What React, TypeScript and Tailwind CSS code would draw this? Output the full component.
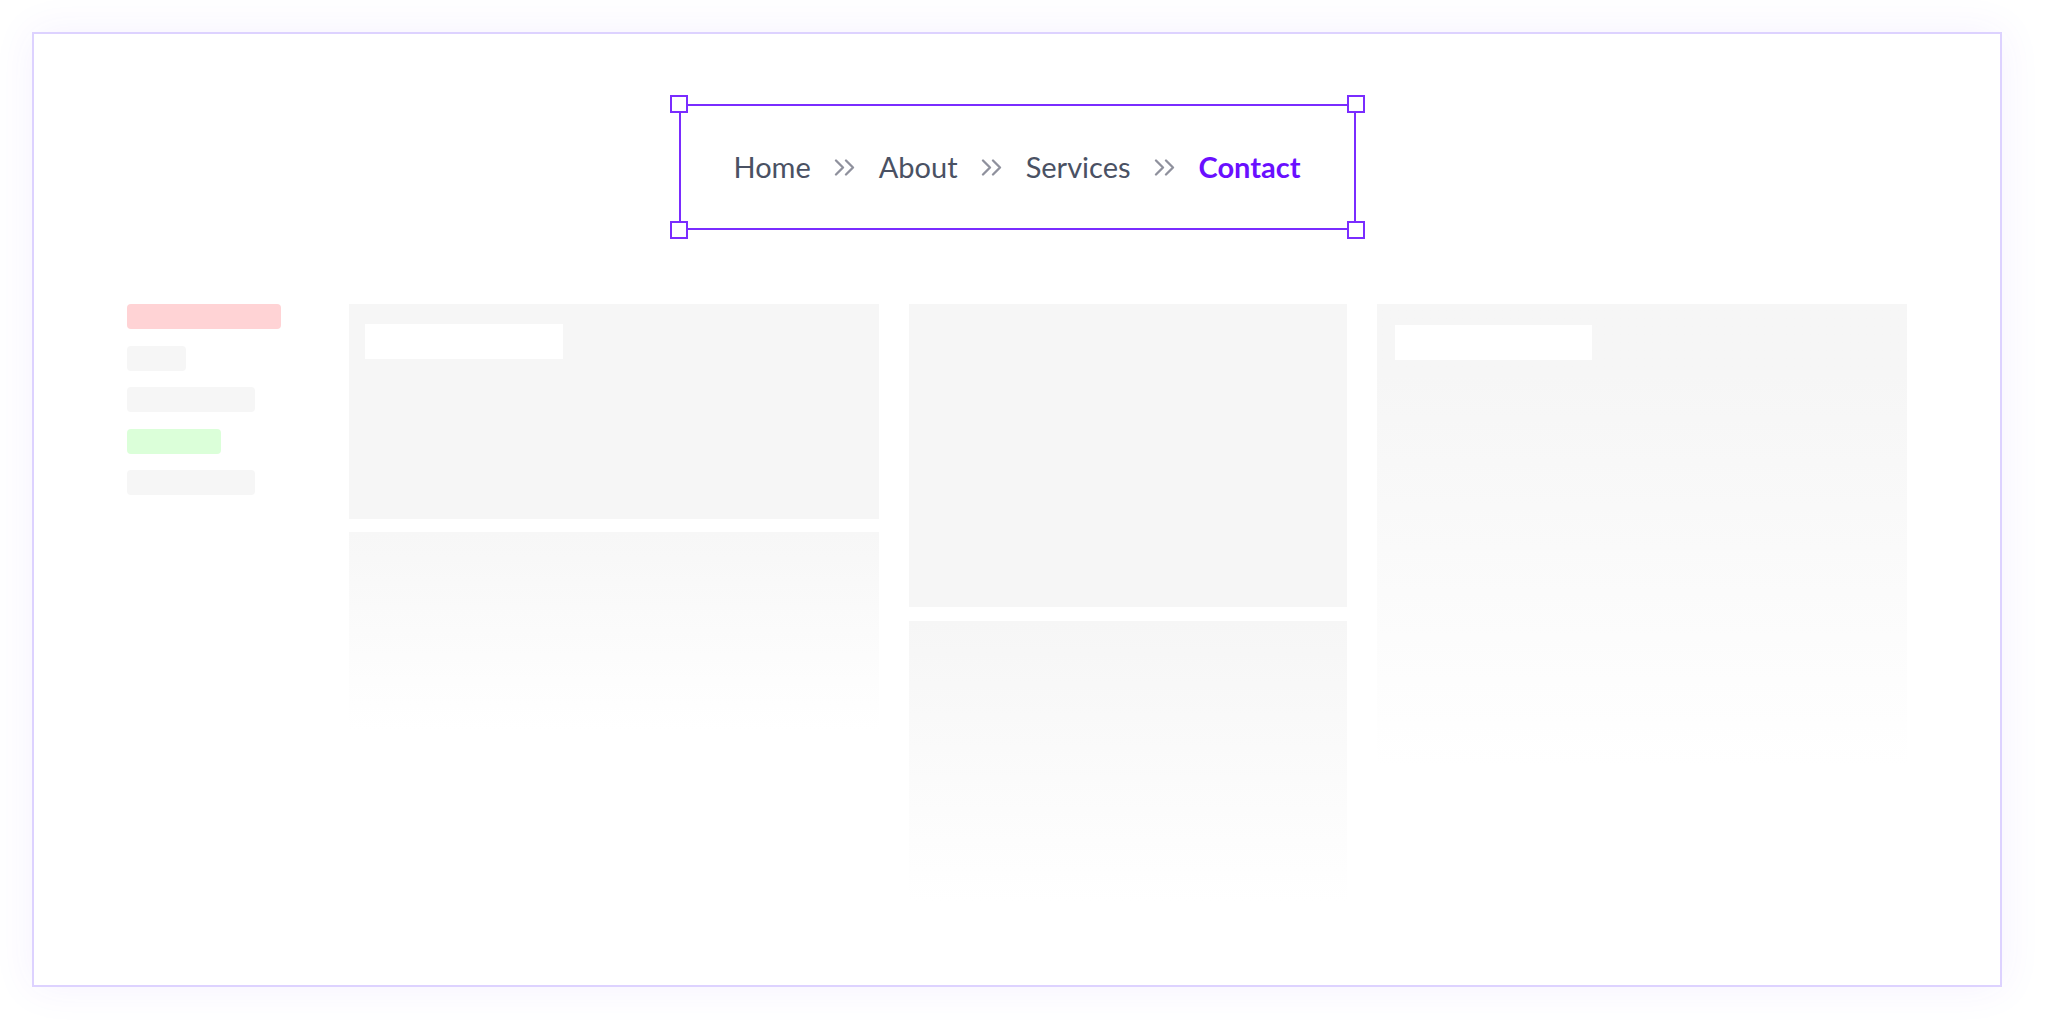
import React from "react";

const crumbs = ["Home", "About", "Services"];

function Chevrons() {
	return (
		<svg
			width="22"
			height="17"
			viewBox="0 0 22 17"
			fill="none"
			stroke="#8f919d"
			strokeWidth="2.3"
			strokeLinecap="round"
			strokeLinejoin="round"
		>
			<path d="M2 1.5 L9 8.5 L2 15.5" />
			<path d="M12 1.5 L19 8.5 L12 15.5" />
		</svg>
	);
}

function Handle({ pos }: { pos: string }) {
	return (
		<span
			className={`absolute w-[18px] h-[18px] bg-white border-2 border-[#7a2cff] ${pos}`}
		/>
	);
}

function Breadcrumb() {
	return (
		<nav className="relative flex h-[126px] w-[677px] items-center justify-center gap-[23px] border-2 border-[#7a2cff] bg-white font-['Lato',sans-serif] text-[29px]">
			{crumbs.map((c) => (
				<React.Fragment key={c}>
					<span className="text-[#4a5163]">{c}</span>
					<Chevrons />
				</React.Fragment>
			))}
			<span className="font-bold text-[#6a0fff]">Contact</span>
			<Handle pos="-left-[11px] -top-[11px]" />
			<Handle pos="-right-[11px] -top-[11px]" />
			<Handle pos="-left-[11px] -bottom-[11px]" />
			<Handle pos="-right-[11px] -bottom-[11px]" />
		</nav>
	);
}

function Sidebar() {
	return (
		<div className="flex w-[155px] shrink-0 flex-col gap-[16.5px]">
			<div className="h-[25px] w-[154px] rounded-[4px] bg-[#ffd3d5]" />
			<div className="h-[25px] w-[59px] rounded-[4px] bg-[#f6f6f6]" />
			<div className="h-[25px] w-[128px] rounded-[4px] bg-[#f6f6f6]" />
			<div className="h-[25px] w-[94px] rounded-[4px] bg-[#dbffd9]" />
			<div className="h-[25px] w-[128px] rounded-[4px] bg-[#f6f6f6]" />
		</div>
	);
}

export default function App() {
	return (
		<div className="h-[1032px] w-full overflow-hidden bg-white p-8">
			<div className="flex h-[955px] w-[1970px] flex-col items-center border-2 border-[#ddd2ff] bg-white pt-[70px] shadow-[0_0_40px_rgba(110,60,255,0.07)]">
				<Breadcrumb />

				<div className="mt-[74px] flex w-full items-start pl-[93px]">
					<Sidebar />

					{/* column 1 */}
					<div className="ml-[67px] flex w-[530px] shrink-0 flex-col gap-[13px]">
						<div className="h-[215px] bg-[#f6f6f6] pl-[16px] pt-[20px]">
							<div className="h-[35px] w-[198px] bg-white" />
						</div>
						<div className="h-[198px] bg-gradient-to-b from-[#f7f7f7] to-white" />
					</div>

					{/* column 2 */}
					<div className="ml-[30px] flex w-[438px] shrink-0 flex-col gap-[14px]">
						<div className="h-[303px] bg-[#f6f6f6]" />
						<div className="h-[282px] bg-gradient-to-b from-[#f6f6f6] to-white" />
					</div>

					{/* column 3 */}
					<div className="ml-[30px] w-[530px] shrink-0">
						<div className="h-[463px] bg-gradient-to-b from-[#f6f6f6] from-15% to-white pl-[18px] pt-[21px]">
							<div className="h-[35px] w-[197px] bg-white" />
						</div>
					</div>
				</div>
			</div>
		</div>
	);
}
